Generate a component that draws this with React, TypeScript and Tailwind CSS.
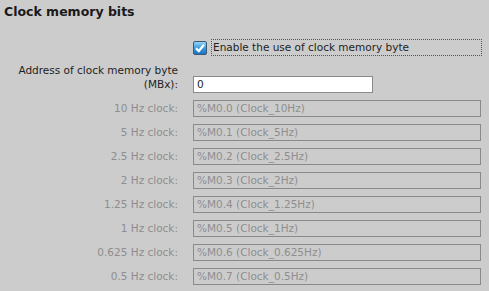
import React from 'react';

const clocks = [
  { label: '10 Hz clock:', value: '%M0.0 (Clock_10Hz)' },
  { label: '5 Hz clock:', value: '%M0.1 (Clock_5Hz)' },
  { label: '2.5 Hz clock:', value: '%M0.2 (Clock_2.5Hz)' },
  { label: '2 Hz clock:', value: '%M0.3 (Clock_2Hz)' },
  { label: '1.25 Hz clock:', value: '%M0.4 (Clock_1.25Hz)' },
  { label: '1 Hz clock:', value: '%M0.5 (Clock_1Hz)' },
  { label: '0.625 Hz clock:', value: '%M0.6 (Clock_0.625Hz)' },
  { label: '0.5 Hz clock:', value: '%M0.7 (Clock_0.5Hz)' },
];

function CheckBox() {
  return (
    <svg width="14" height="14" viewBox="0 0 14 14" className="shrink-0">
      <defs>
        <linearGradient id="cb" x1="0" y1="0" x2="0" y2="1">
          <stop offset="0" stopColor="#9fd8f5" />
          <stop offset="0.5" stopColor="#3a9be0" />
          <stop offset="1" stopColor="#1f6fc0" />
        </linearGradient>
      </defs>
      <rect x="0.5" y="0.5" width="13" height="13" rx="1.5" fill="url(#cb)" stroke="#3c5a78" />
      <path d="M3 7.2 L5.8 10 L11 3.8" fill="none" stroke="#ffffff" strokeWidth="2.2" />
    </svg>
  );
}

export default function App() {
  return (
    <div className="w-[489px] h-[291px] bg-[#cccccc] font-['DejaVu_Sans',sans-serif] text-[10.5px] overflow-hidden">
      <div className="pl-[4px] pt-[3px] h-[39px] font-bold text-[12.5px] text-[#1a1a1a]">
        Clock memory bits
      </div>

      <div className="flex items-center h-[17px] pl-[193px]">
        <CheckBox />
        <div className="ml-[4px] w-[271px] h-[17px] border border-dotted border-[#555] flex items-center pl-[1px] text-[#1e1e1e]">
          Enable the use of clock memory byte
        </div>
      </div>

      <div className="flex items-end mt-[7px]">
        <div className="w-[178px] text-right leading-[14px] pb-[2px] text-[#1e1e1e]">
          Address of clock memory byte
          <br />
          (MBx):
        </div>
        <div className="ml-[15px] w-[180px] h-[17px] bg-white border border-[#8a8a8a] flex items-center pl-[3px] text-[#1e1e1e]">
          0
        </div>
      </div>

      <div className="flex flex-col gap-[7px] mt-[7px]">
        {clocks.map((c) => (
          <div key={c.label} className="flex items-center">
            <div className="w-[178px] text-right text-[#8e8e8e]">{c.label}</div>
            <div className="ml-[15px] w-[288px] h-[17px] border border-[#8a8a8a] flex items-center pl-[3px] text-[#8e8e8e]">
              {c.value}
            </div>
          </div>
        ))}
      </div>
    </div>
  );
}
